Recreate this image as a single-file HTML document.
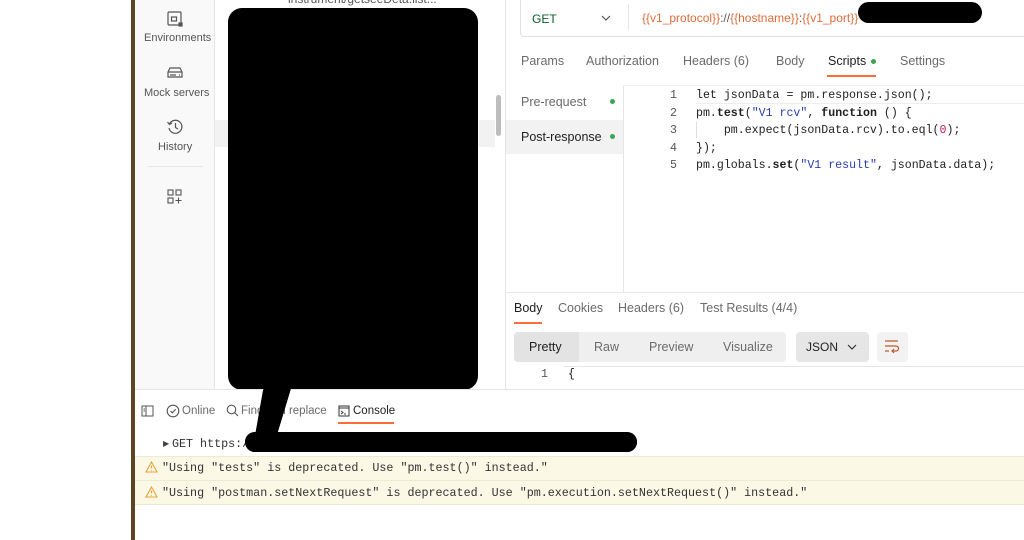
<!DOCTYPE html>
<html><head><meta charset="utf-8"><style>
*{margin:0;padding:0;box-sizing:border-box}
body{width:1024px;height:540px;overflow:hidden;background:#fff;font-family:"Liberation Sans",sans-serif;font-size:12px;color:#212121;position:relative}
.a{position:absolute;white-space:pre}
.m{font-family:"Liberation Mono",monospace}
.g{color:#6b6b6b}
</style></head><body>
<div class="a" style="left:131px;top:0;width:4px;height:540px;background:#5b4525"></div>
<!-- sidebar -->
<div class="a" style="left:135px;top:0;width:80px;height:390px;background:#f9f9f9;border-right:1px solid #e6e6e6"></div>
<svg class="a" style="left:166px;top:10px" width="18" height="18" viewBox="0 0 18 18" fill="none" stroke="#555" stroke-width="1.2"><rect x="2" y="2" width="13" height="13" rx="1"/><rect x="5.5" y="7" width="5" height="4"/><rect x="13" y="13" width="3" height="3" fill="#555"/></svg>
<div class="a" style="left:144px;top:32px;font-size:11px;color:#555">Environments</div>
<svg class="a" style="left:166px;top:65px" width="18" height="16" viewBox="0 0 18 16" fill="none" stroke="#555" stroke-width="1.2"><path d="M2 7 L4 3 H14 L16 7 V12 H2 Z M2 7 H16 M5 9 V11 M7 9 V11 M9 9 V11 M13 10 H14"/></svg>
<div class="a" style="left:144px;top:87px;font-size:11px;color:#555">Mock servers</div>
<svg class="a" style="left:166px;top:118px" width="18" height="18" viewBox="0 0 18 18" fill="none" stroke="#555" stroke-width="1.2"><path d="M3.5 6 A6.5 6.5 0 1 1 3 10 M1.5 4 L3.5 6.5 L6 5 M9.5 5 V9.5 L12 11"/></svg>
<div class="a" style="left:158px;top:141px;font-size:11px;color:#555">History</div>
<div class="a" style="left:148px;top:166px;width:55px;height:1px;background:#e6e6e6"></div>
<svg class="a" style="left:167px;top:189px" width="16" height="16" viewBox="0 0 16 16" fill="none" stroke="#555" stroke-width="1.1"><rect x="1" y="1" width="5" height="5"/><rect x="9" y="1" width="5" height="5"/><rect x="1" y="9" width="5" height="5"/><path d="M11.5 8.5 V14.5 M8.5 11.5 H14.5"/></svg>
<!-- tree -->
<div class="a" style="left:215px;top:120px;width:280px;height:27px;background:#f2f2f2"></div>
<div class="a" style="left:496px;top:95px;width:5px;height:41px;background:#bdbdbd;border-radius:3px"></div>
<div class="a" style="left:288px;top:-8px;color:#555">instrument/getseeDeta.list...</div>
<div class="a" style="left:505px;top:0;width:1px;height:390px;background:#e6e6e6"></div>
<!-- blob -->
<div class="a" style="left:228px;top:8px;width:250px;height:382px;background:#000;border-radius:14px"></div>
<svg class="a" style="left:0;top:0" width="1024" height="540"><path d="M264 385 L255 436 L276 438 L292 385Z" fill="#000"/></svg>
<div class="a" style="left:245px;top:432px;width:392px;height:20px;background:#000;border-radius:10px"></div>
<div class="a" style="left:858px;top:2px;width:124px;height:21px;background:#000;border-radius:11px"></div>
<!-- url -->
<div class="a" style="left:520px;top:-4px;width:520px;height:41px;border:1px solid #e0e0e0;border-radius:4px"></div>
<div class="a" style="left:532px;top:12px;color:#0b5c2b;font-size:12px">GET</div>
<svg class="a" style="left:601px;top:15px" width="10" height="7"><path d="M1 1 L5 5 L9 1" fill="none" stroke="#555" stroke-width="1.2"/></svg>
<div class="a" style="left:628px;top:4px;width:1px;height:26px;background:#e6e6e6"></div>
<div class="a" style="left:642px;top:11px;color:#e06c3c;font-size:12px">{{v1_protocol}}<span style="color:#555">://</span>{{hostname}}<span style="color:#555">:</span>{{v1_port}}</div>
<!-- tabs -->
<div class="a g" style="left:521px;top:54px;font-size:12.5px">Params</div>
<div class="a g" style="left:586px;top:54px;font-size:12.5px">Authorization</div>
<div class="a g" style="left:683px;top:54px;font-size:12.5px">Headers (6)</div>
<div class="a g" style="left:776px;top:54px;font-size:12.5px">Body</div>
<div class="a" style="left:828px;top:54px;font-size:12.5px">Scripts</div>
<div class="a" style="left:871px;top:59px;width:5px;height:5px;border-radius:50%;background:#3aa655"></div>
<div class="a g" style="left:900px;top:54px;font-size:12.5px">Settings</div>
<div class="a" style="left:827px;top:75px;width:49px;height:2px;background:#ff6c37"></div>
<!-- script nav -->
<div class="a g" style="left:521px;top:95px;font-size:12.5px">Pre-request</div>
<div class="a" style="left:610px;top:99px;width:5px;height:5px;border-radius:50%;background:#3aa655"></div>
<div class="a" style="left:506px;top:120px;width:117px;height:34px;background:#f2f2f2"></div>
<div class="a" style="left:521px;top:130px;font-size:12.5px">Post-response</div>
<div class="a" style="left:610px;top:134px;width:5px;height:5px;border-radius:50%;background:#3aa655"></div>
<div class="a" style="left:623px;top:85px;width:1px;height:207px;background:#e6e6e6"></div>
<div class="a" style="left:623px;top:85px;width:401px;height:1px;background:#eee"></div>
<div class="a" style="left:696px;top:103px;width:328px;height:1px;background:#eee"></div>
<div class="a" style="left:696px;top:122px;width:1px;height:16px;background:#ddd"></div>
<div class="a m" style="left:660px;top:87px;width:17px;text-align:right;font-size:11.6px;line-height:17.6px;color:#555">1<br>2<br>3<br>4<br>5</div>
<div class="a m" style="left:696px;top:87px;font-size:11.6px;line-height:17.6px;color:#212121">let jsonData = pm.response.json();
pm.<b>test</b>(<span style="color:#2a3eb1">"V1 rcv"</span>, <b>function</b> () {
    pm.expect(jsonData.rcv).to.eql(<span style="color:#c2185b">0</span>);
});
pm.globals.<b>set</b>(<span style="color:#2a3eb1">"V1 result"</span>, jsonData.data);</div>
<div class="a" style="left:505px;top:292px;width:519px;height:1px;background:#e6e6e6"></div>
<!-- response -->
<div class="a" style="left:514px;top:301px;font-size:12.5px">Body</div>
<div class="a g" style="left:558px;top:301px;font-size:12.5px">Cookies</div>
<div class="a g" style="left:618px;top:301px;font-size:12.5px">Headers (6)</div>
<div class="a g" style="left:700px;top:301px;font-size:12.5px">Test Results (4/4)</div>
<div class="a" style="left:514px;top:322px;width:28px;height:2px;background:#ff6c37"></div>
<div class="a" style="left:514px;top:332px;width:272px;height:30px;background:#efefef;border-radius:4px"></div>
<div class="a" style="left:514px;top:332px;width:65px;height:30px;background:#e3e3e3;border-radius:4px 0 0 4px"></div>
<div class="a" style="left:529px;top:340px;font-size:12.5px">Pretty</div>
<div class="a g" style="left:594px;top:340px;font-size:12.5px">Raw</div>
<div class="a g" style="left:649px;top:340px;font-size:12.5px">Preview</div>
<div class="a g" style="left:723px;top:340px;font-size:12.5px">Visualize</div>
<div class="a" style="left:796px;top:332px;width:73px;height:30px;background:#e6e6e6;border-radius:4px"></div>
<div class="a" style="left:806px;top:340px;font-size:12px">JSON</div>
<svg class="a" style="left:847px;top:344px" width="10" height="7"><path d="M1 1 L5 5 L9 1" fill="none" stroke="#333" stroke-width="1.2"/></svg>
<div class="a" style="left:877px;top:332px;width:31px;height:30px;background:#f2f2f2;border-radius:4px"></div>
<svg class="a" style="left:884px;top:339px" width="16" height="16" fill="none" stroke="#c0582a" stroke-width="1.2"><path d="M1 2 H14 M1 7 H12 A2.5 2.5 0 0 1 12 12 H8 M10 10 L8 12 L10 14 M1 12 H5"/></svg>
<div class="a" style="left:564px;top:366px;width:460px;height:1px;background:#e6e6e6"></div>
<div class="a m" style="left:541px;top:368px;font-size:11.6px;color:#555">1</div>
<div class="a m" style="left:568px;top:368px;font-size:11.6px">{</div>
<!-- console -->
<div class="a" style="left:135px;top:389px;width:889px;height:1px;background:#e6e6e6"></div>
<svg class="a" style="left:141px;top:405px" width="13" height="12" fill="none" stroke="#555" stroke-width="1"><rect x="1" y="1" width="11" height="10"/><path d="M5 1 V11 M2.5 4 H4 M2.5 6 H4"/></svg>
<svg class="a" style="left:166px;top:404px" width="14" height="14" fill="none" stroke="#555" stroke-width="1.1"><circle cx="7" cy="7" r="5.8"/><path d="M4.5 7 L6.3 8.8 L9.7 5.2"/></svg>
<div class="a g" style="left:182px;top:405px;font-size:11.5px">Online</div>
<svg class="a" style="left:226px;top:404px" width="13" height="13" fill="none" stroke="#555" stroke-width="1.1"><circle cx="5.5" cy="5.5" r="4.3"/><path d="M8.7 8.7 L12 12"/></svg>
<div class="a g" style="left:241px;top:405px;font-size:11.5px">Find and replace</div>
<svg class="a" style="left:0;top:0" width="1024" height="540"><path d="M264 385 L255 436 L276 438 L292 385Z" fill="#000"/></svg>
<svg class="a" style="left:338px;top:405px" width="12" height="12" fill="none" stroke="#333" stroke-width="1"><rect x="1" y="1" width="10" height="10"/><path d="M1 3 H11 M3 6 L5 7.5 L3 9 M6 9 H8"/></svg>
<div class="a" style="left:353px;top:405px;font-size:11.5px">Console</div>
<div class="a" style="left:338px;top:422px;width:56px;height:2px;background:#ff6c37"></div>
<div class="a" style="left:163px;top:439px;font-size:8px;color:#444">▶</div>
<div class="a m" style="left:172px;top:437px;font-size:11.7px;color:#333">GET https:/</div>
<div class="a" style="left:245px;top:432px;width:392px;height:20px;background:#000;border-radius:10px"></div>
<div class="a" style="left:135px;top:456px;width:889px;height:25px;background:#fbf8e6;border-top:1px solid #eeebd5;border-bottom:1px solid #eeebd5"></div>
<div class="a" style="left:135px;top:481px;width:889px;height:24px;background:#fbf8e6;border-bottom:1px solid #eeebd5"></div>
<svg class="a" style="left:145px;top:461px" width="13" height="12" fill="none" stroke="#e8a33a" stroke-width="1.1"><path d="M6.5 1 L12 11 H1 Z M6.5 4.5 V7.5 M6.5 9 V9.8"/></svg>
<svg class="a" style="left:145px;top:486px" width="13" height="12" fill="none" stroke="#e8a33a" stroke-width="1.1"><path d="M6.5 1 L12 11 H1 Z M6.5 4.5 V7.5 M6.5 9 V9.8"/></svg>
<div class="a m" style="left:162px;top:461px;font-size:11.7px;color:#333">"Using "tests" is deprecated. Use "pm.test()" instead."</div>
<div class="a m" style="left:162px;top:486px;font-size:11.7px;color:#333">"Using "postman.setNextRequest" is deprecated. Use "pm.execution.setNextRequest()" instead."</div>
</body></html>
